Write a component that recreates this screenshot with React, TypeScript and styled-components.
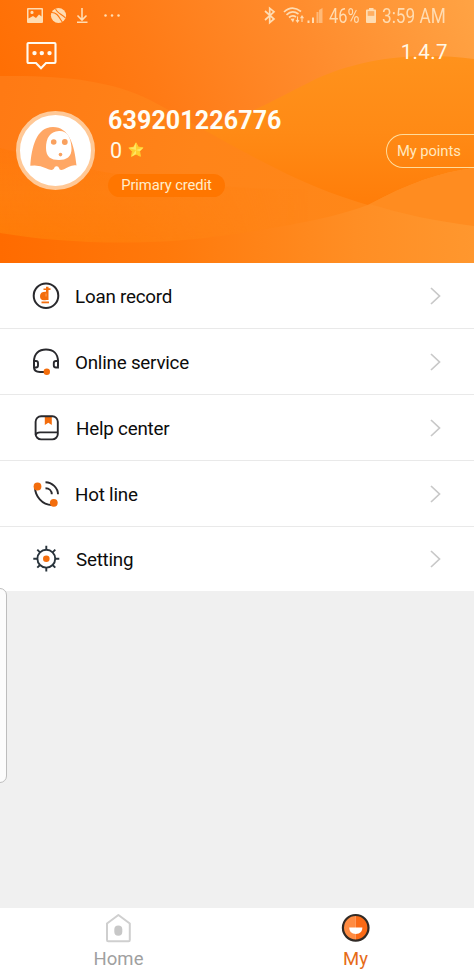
import React from 'react';
import styled, { createGlobalStyle } from 'styled-components';

const GlobalStyle = createGlobalStyle`
  * { box-sizing: border-box; }
  body { margin: 0; background: #f0f0f0; font-family: Roboto, "Liberation Sans", sans-serif; }
`;

const Screen = styled.div`
  position: relative;
  display: flex;
  flex-direction: column;
  width: 474px;
  height: 974px;
  overflow: hidden;
  background: #f0f0f0;
`;

const Header = styled.header`
  position: relative;
  isolation: isolate;
  height: 263px;
  flex: none;
  color: #fff8e6;
`;

const Backdrop = styled.svg`
  position: absolute;
  inset: 0;
  z-index: -1;
`;

const StatusBar = styled.div`
  display: flex;
  justify-content: space-between;
  height: 32px;
  padding: 0 28px 0 26px;
  color: #ffdcb2;
`;

const StatusGroup = styled.div`
  display: flex;
  align-items: center;
`;

const StatusText = styled.span<{ $width: number; $scale: number }>`
  width: ${(p) => p.$width}px;
  font-size: 20px;
  line-height: 32px;
  white-space: nowrap;
  transform: scaleX(${(p) => p.$scale});
  transform-origin: left;
`;

const TitleBar = styled.div`
  display: flex;
  justify-content: space-between;
  height: 48px;
  padding: 9px 26px 0;
`;

const Version = styled.span`
  font-size: 20.5px;
  line-height: 24px;
  letter-spacing: 0.4px;
  margin-top: -1px;
`;

const Profile = styled.div`
  display: flex;
  padding: 24px 0 0 16px;
`;

const Avatar = styled.div`
  display: flex;
  width: 79px;
  height: 79px;
  margin-top: 7px;
  border: 4px solid #ffc896;
  border-radius: 50%;
  background: #fff;
`;

const Details = styled.div`
  display: flex;
  flex-direction: column;
  align-items: flex-start;
  width: 220px;
  margin-left: 13px;
`;

const Phone = styled.span`
  height: 32px;
  padding-top: 1px;
  font-size: 25px;
  font-weight: 700;
  line-height: 32px;
  letter-spacing: 0.12px;
  color: #fffdf5;
`;

const Score = styled.div`
  display: flex;
  align-items: center;
  gap: 6px;
  height: 28px;
  padding-left: 2px;
  font-size: 21.5px;
`;

const CreditTag = styled.span`
  width: 117px;
  height: 23px;
  margin-top: 10px;
  border-radius: 12px;
  background: #ff7600;
  font-size: 14.8px;
  line-height: 23px;
  letter-spacing: -0.1px;
  text-align: center;
  color: #ffedcb;
`;

const PointsButton = styled.button`
  width: 88px;
  height: 34px;
  margin: 30px 0 0 auto;
  padding: 0 0 0 10px;
  border: 1.5px solid #ffdc9c;
  border-right: 0;
  border-radius: 17px 0 0 17px;
  background: transparent;
  color: #ffe8bf;
  font: 14.8px/30px Roboto, sans-serif;
  letter-spacing: -0.1px;
  text-align: left;
`;

const Menu = styled.main`
  display: grid;
  grid-template-rows: repeat(4, 66px) 64px;
  height: 328px;
  flex: none;
  background: #fff;
`;

const MenuRow = styled.div`
  display: flex;
  align-items: center;
  padding: 1px 32px 0;
  border-bottom: 1px solid #e9e9e9;
  &:last-child { border-bottom: 0; padding-top: 0; }
`;

const MenuLabel = styled.span<{ $inset: number }>`
  flex: 1;
  margin-left: ${(p) => p.$inset}px;
  padding-top: 2px;
  font-size: 18.8px;
  line-height: 24px;
  letter-spacing: -0.22px;
  color: #0c0c0c;
`;

const EdgeHandle = styled.div`
  position: absolute;
  left: -10px;
  top: 588px;
  width: 17px;
  height: 195px;
  border: 1px solid #bdbdbd;
  border-radius: 7px;
  background: #fcfcfc;
`;

const NavBar = styled.nav`
  display: grid;
  grid-template-columns: 1fr 1fr;
  height: 66px;
  margin-top: auto;
  background: #fff;
`;

const NavItem = styled.div<{ $color: string; $spacing: number }>`
  display: flex;
  flex-direction: column;
  align-items: center;
  padding-top: 4px;
  font-size: 18.5px;
  line-height: 24px;
  letter-spacing: ${(p) => p.$spacing}px;
  color: ${(p) => p.$color};
  svg { margin-bottom: 3px; }
`;

const Waves = () => (
  <Backdrop width="474" height="263" viewBox="0 0 474 263">
    <defs>
      <linearGradient id="sky" x1="0" y1="0.25" x2="1" y2="0">
        <stop offset="0" stopColor="#ff6f04" />
        <stop offset="0.3" stopColor="#ff7b16" />
        <stop offset="0.62" stopColor="#ff8b2c" />
        <stop offset="1" stopColor="#ffa344" />
      </linearGradient>
      <linearGradient id="hill" gradientUnits="userSpaceOnUse" x1="0" y1="57" x2="0" y2="210">
        <stop offset="0" stopColor="#ff921c" />
        <stop offset="0.5" stopColor="#ff8a15" />
        <stop offset="1" stopColor="#ff7c08" />
      </linearGradient>
      <linearGradient id="wave" gradientUnits="userSpaceOnUse" x1="0" y1="100" x2="474" y2="200">
        <stop offset="0" stopColor="#ff7a14" />
        <stop offset="0.42" stopColor="#ff8419" />
        <stop offset="1" stopColor="#ff8918" />
      </linearGradient>
      <linearGradient id="low" gradientUnits="userSpaceOnUse" x1="0" y1="146" x2="0" y2="250">
        <stop offset="0" stopColor="#ff7808" stopOpacity="0.55" />
        <stop offset="0.45" stopColor="#ff7e0b" stopOpacity="0.7" />
        <stop offset="1" stopColor="#ff7b04" />
      </linearGradient>
      <linearGradient id="fade" x1="0" y1="0" x2="1" y2="0">
        <stop offset="0" stopColor="#fff" />
        <stop offset="0.25" stopColor="#fff" stopOpacity="0.7" />
        <stop offset="0.65" stopColor="#fff" stopOpacity="0" />
      </linearGradient>
      <mask id="lowMask"><rect width="474" height="263" fill="url(#fade)" /></mask>
      <linearGradient id="front" gradientUnits="userSpaceOnUse" x1="0" y1="0" x2="474" y2="0">
        <stop offset="0" stopColor="#ff6b00" />
        <stop offset="0.35" stopColor="#ff790b" />
        <stop offset="0.75" stopColor="#ff8e24" />
        <stop offset="1" stopColor="#ff972e" />
      </linearGradient>
    </defs>
    <rect width="474" height="263" fill="url(#sky)" />
    <path d="M160 140C220 131 260 107 310 82C360 57 420 52 474 59V263H160Z" fill="url(#hill)" />
    <path d="M0 76C60 75 111 80 150 100C205 129 276 174 340 196C388 213 434 221 474 226V263H0Z" fill="url(#wave)" />
    <path d="M0 148C60 163 150 190 330 190V263H0Z" fill="url(#low)" mask="url(#lowMask)" />
    <path d="M0 233C65 244 155 247 235 234C300 224 340 216 370 204C407 184 440 172 474 168V263H0Z" fill="url(#front)" />
    <path d="M370 204C407 184 440 172 474 168V226C435 221 402 214 370 204Z" fill="#ff8c20" />
  </Backdrop>
);

const NotificationIcons = () => (
  <svg width="100" height="32" viewBox="26 0 100 32" fill="currentColor">
    <path fillRule="evenodd" d="M28 8H42Q43 8 43 9V22Q43 23 42 23H28Q27 23 27 22V9Q27 8 28 8ZM28.5 9.6V18.6L33 16L36 18L39 14.5L41.5 16.5V9.6ZM32 10.8A1.6 1.6 0 1 1 32 14A1.6 1.6 0 1 1 32 10.8Z" />
    <circle cx="58.5" cy="15.5" r="7.6" />
    <path d="M51 12.500C57 12 59 17 62.500 22.500M55.500 8.500C56.500 13 62 14 65.500 18" fill="none" stroke="#ff770f" strokeWidth="1.100" />
    <path d="M82 8V20M77.5 15.5L82 20L86.5 15.5M77 22.3H87.5" fill="none" stroke="currentColor" strokeWidth="1.6" />
    <circle cx="105.5" cy="15.5" r="1.25" /><circle cx="112" cy="15.5" r="1.25" /><circle cx="118.5" cy="15.5" r="1.25" />
  </svg>
);

const ConnectivityIcons = () => (
  <svg width="66" height="32" viewBox="263 0 66 32" fill="none" stroke="currentColor" strokeWidth="1.7">
    <path d="M265 11L274 19L269.7 22.7V8.2L274 11.8L265 20" />
    <path d="M284 12Q292 4.500 301 11.500M286.500 14.800Q292 9.500 298.500 14M289 17.500Q292.500 14.500 296 17" />
    <path d="M290.500 18.800L294.500 18.500L293 22.500Z" fill="currentColor" stroke="none" />
    <path d="M297.500 16.500V21.500M296 20L297.500 22L299 20M302 22V16.500M300.500 18.200L302 16L303.500 18.200" strokeWidth="1.1" />
    <path d="M307.500 23V20.500H309.500V23ZM312 23V17.500H314V23Z" fill="currentColor" stroke="none" />
    <path d="M316.500 23V12H318.500V23ZM319 23V10L322.500 8V23Z" fill="currentColor" stroke="none" opacity="0.55" />
  </svg>
);

const BatteryIcon = () => (
  <svg width="18" height="32" viewBox="364 0 18 32" fill="currentColor">
    <path fillRule="evenodd" d="M369 8H373.500V9.500H375Q376 9.500 376 10.500V22Q376 23 375 23H367Q366 23 366 22V10.500Q366 9.500 367 9.500H369ZM367.800 11.300V15.800H374.200V11.300Z" />
    <path d="M367.800 11.300H374.200V15.800H367.800Z" opacity="0.35" />
  </svg>
);

const MessageIcon = () => (
  <svg width="32" height="30" viewBox="0 0 32 30" fill="none">
    <path d="M2.500 2H28.500Q29.500 2 29.500 3V21Q29.500 22 28.500 22H20L15 27.300L10 22H2.500Q1.500 22 1.500 21V3Q1.500 2 2.500 2Z" stroke="#fffaf0" strokeWidth="2.100" />
    <g fill="#fffaf0"><circle cx="8.500" cy="12.100" r="2.200" /><circle cx="15.800" cy="12.100" r="2.200" /><circle cx="23.500" cy="12.100" r="2.200" /></g>
  </svg>
);

const GhostIcon = () => (
  <svg width="71" height="71" viewBox="20 115 71 71">
    <path d="M30.300 165.800C31.500 148 36 127 53 127C69 127 74.500 145 76.500 165.500C71.500 164.500 67.500 168 64 169.300Q59.500 171.300 59 168Q58.500 166 56.500 166.200Q54.500 166.200 54 168.500Q52.500 171.500 46 168.300Q39 164.500 30.300 165.800Z" fill="#ffa765" />
    <path d="M59 131C67 130.500 71 137 71.500 148C72 157 66 160 59 160C51 160 46 157 46 148C46 138 50 131.500 59 131Z" fill="#fff" />
    <circle cx="53.700" cy="142" r="2.800" fill="#f9a15f" /><circle cx="64.800" cy="142" r="2.900" fill="#f9a15f" />
    <circle cx="60.500" cy="154.600" r="1.800" fill="#f9a15f" />
  </svg>
);

const StarIcon = () => (
  <svg width="16" height="16" viewBox="0 0 16 16">
    <path d="M8 .8L10.200 5.100L15 5.800L11.600 9.300L12.400 14.300L8 12L3.500 14.400L4.400 9.500L.8 6L5.700 5.200Z" fill="#ffcf30" stroke="#ffcf30" strokeLinejoin="round" />
    <path d="M8 1V8L.8 6L5.700 5.200ZM8 8L3.500 14.400L8 12ZM8 8L15 5.800L11.600 9.300Z" fill="#ffe564" />
  </svg>
);

const LoanIcon = () => (
  <svg width="28" height="30" viewBox="0 0 28 30">
    <circle cx="14" cy="14.700" r="12.300" fill="none" stroke="#29292d" strokeWidth="2" />
    <g fill="#f36d0c"><path d="M14 5.800H16.500V7.200H18.500V9H16.500V19H14.500Q8 20.500 8 15Q8 10.500 14 10.700V9H11.500V7.500H14Z" /><path d="M9.500 20.500H17V22.300H9.500Z" /></g>
    <path d="M14 12.500V15.500" stroke="#ffac6f" strokeWidth=".8" />
  </svg>
);

const HeadsetIcon = () => (
  <svg width="28" height="30" viewBox="0 0 28 30" fill="none" stroke="#29292d" strokeWidth="1.900">
    <path d="M2 19V14.500C2 6.500 7 2.500 14 2.500S26 6.500 26 14.500V19" />
    <path d="M2 14H4Q6 14 6 16V18.500Q6 20.500 4 20.500H2ZM26 14H24Q21.800 14 21.800 16V18.500Q21.800 20.500 24 20.500H26ZM2 20C2 24 4 25 8 25H12" />
    <circle cx="14.800" cy="24.700" r="3.200" fill="#f36d0c" stroke="none" />
  </svg>
);

const BookIcon = () => (
  <svg width="28" height="30" viewBox="0 0 28 30" fill="none">
    <path d="M16.500 3.500H12.800V12L16.300 9.800L19.800 12V3.500Z" fill="#f36d0c" />
    <rect x="3.600" y="3.300" width="22.200" height="23.100" rx="5.500" stroke="#29292d" strokeWidth="1.900" />
    <path d="M3.600 22Q4.500 19.400 8 19.400H25.500" stroke="#29292d" strokeWidth="1.900" />
  </svg>
);

const PhoneIcon = () => (
  <svg width="28" height="30" viewBox="0 0 28 30" fill="none" stroke="#29292d" strokeWidth="1.900">
    <path d="M3 8C3 17 10 26 20 26M13.500 3.200C20 3.200 26 9 26 15.300M13.500 9.200C17 9.200 19.800 11.500 19.800 15.300" />
    <circle cx="5.500" cy="7.500" r="3.900" fill="#f36d0c" stroke="none" /><circle cx="21.800" cy="23.800" r="3.900" fill="#f36d0c" stroke="none" />
  </svg>
);

const GearIcon = () => (
  <svg width="28" height="30" viewBox="0 0 28 30" fill="none" stroke="#29343c" strokeWidth="1.900">
    <circle cx="14.300" cy="14.700" r="8.900" />
    <circle cx="14.300" cy="14.700" r="3.300" fill="#f36d0c" stroke="none" />
    <path d="M14.300 1.800V6M14.300 23.500V27.500M1.300 14.700H5.500M23 14.700H27.300M5.300 5.700L8 8.400M20.600 21L23.300 23.700M5.300 23.700L8 21M20.600 8.400L23.300 5.700" />
  </svg>
);

const Chevron = () => (
  <svg width="12" height="18" viewBox="0 0 12 18" fill="none">
    <path d="M1 1L9.500 9L1 17" stroke="#c8c8c8" strokeWidth="1.700" />
  </svg>
);

const HomeIcon = () => (
  <svg width="28" height="32" viewBox="0 0 28 32" fill="none">
    <path d="M2 11.500L13.400 3L24.800 11.500V28Q24.800 29.200 23.600 29.200H3.200Q2 29.200 2 28Z" stroke="#cfcfcf" strokeWidth="2" strokeLinejoin="round" />
    <rect x="9.300" y="13.500" width="8" height="10.200" rx="4" fill="#c7c7c7" />
  </svg>
);

const FaceIcon = () => (
  <svg width="30" height="32" viewBox="0 0 30 32">
    <path d="M14.700 3A12.800 12.800 0 0 0 14.700 28.600Z" fill="#ff8b42" />
    <path d="M14.700 3A12.800 12.800 0 0 1 14.700 28.600Z" fill="#fa6a16" />
    <circle cx="14.700" cy="15.800" r="12.800" fill="none" stroke="#302a26" strokeWidth="2.200" />
    <path d="M8.200 15.500H21.400Q21.400 22 14.800 22T8.200 15.500Z" fill="#fff" />
  </svg>
);

const menuItems = [
  { label: 'Loan record', Icon: LoanIcon, inset: 15 },
  { label: 'Online service', Icon: HeadsetIcon, inset: 15 },
  { label: 'Help center', Icon: BookIcon, inset: 16 },
  { label: 'Hot line', Icon: PhoneIcon, inset: 15 },
  { label: 'Setting', Icon: GearIcon, inset: 16 },
];

export default function App() {
  return (
    <>
      <GlobalStyle />
      <Screen>
        <Header>
          <Waves />
          <StatusBar>
            <StatusGroup><NotificationIcons /></StatusGroup>
            <StatusGroup>
              <ConnectivityIcons />
              <StatusText $width={35} $scale={0.82}>46%</StatusText>
              <BatteryIcon />
              <StatusText $width={64} $scale={0.86}>3:59 AM</StatusText>
            </StatusGroup>
          </StatusBar>
          <TitleBar>
            <MessageIcon />
            <Version>1.4.7</Version>
          </TitleBar>
          <Profile>
            <Avatar><GhostIcon /></Avatar>
            <Details>
              <Phone>639201226776</Phone>
              <Score>0 <StarIcon /></Score>
              <CreditTag>Primary credit</CreditTag>
            </Details>
            <PointsButton>My points</PointsButton>
          </Profile>
        </Header>
        <Menu>
          {menuItems.map(({ label, Icon, inset }) => (
            <MenuRow key={label}>
              <Icon />
              <MenuLabel $inset={inset}>{label}</MenuLabel>
              <Chevron />
            </MenuRow>
          ))}
        </Menu>
        <EdgeHandle />
        <NavBar>
          <NavItem $color="#a0a0a0" $spacing={0.1}><HomeIcon />Home</NavItem>
          <NavItem $color="#e66b18" $spacing={0}><FaceIcon />My</NavItem>
        </NavBar>
      </Screen>
    </>
  );
}
